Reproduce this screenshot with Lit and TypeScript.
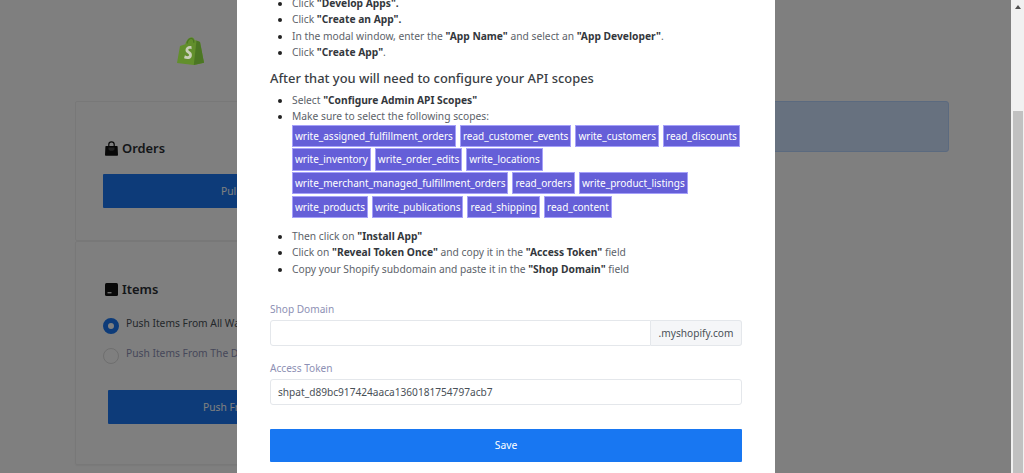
import { LitElement, html, css } from "lit";
import { customElement } from "lit/decorators.js";

const SCOPES = [
  ["write_assigned_fulfillment_orders", "read_customer_events", "write_customers", "read_discounts"],
  ["write_inventory", "write_order_edits", "write_locations"],
  ["write_merchant_managed_fulfillment_orders", "read_orders", "write_product_listings"],
  ["write_products", "write_publications", "read_shipping", "read_content"],
];

@customElement("app-root")
export class AppRoot extends LitElement {
  static styles = css`
    :host { display: block; width: 1024px; height: 473px; position: relative; overflow: hidden;
      font-family: "Noto Sans", "Open Sans", sans-serif; font-size: 10.25px; color: #5c6269; background: #fff; }
    * { box-sizing: border-box; }
    .page { width: 1011px; height: 473px; padding: 37px 62px 0 75px; overflow: hidden; }
    .logo { margin-left: 101px; height: 28px; width: 29px; display: block; position: relative; z-index: 1; }
    .cols { display: flex; gap: 16px; margin-top: 36px; }
    .left { width: 412px; flex: none; display: flex; flex-direction: column; }
    .right { flex: 1; }
    .alert { height: 51px; width: 100%; border-radius: 3px; background: #cfe2ff; border: 1px solid #b6d4fe; }
    .card { border: 1px solid #f0f0f0; border-radius: 2px; padding: 0 27px; }
    .card.orders { height: 140px; padding-top: 36px; }
    .card.items { height: 224px; padding-top: 37px; box-shadow: 0 1px 2px rgba(0,0,0,.06); }
    .title { display: flex; align-items: center; gap: 4px; font-size: 12.9px; font-weight: 600; color: #2a2e33; height: 20px; padding-left: 2px; }
    .title svg { width: 13px; height: 15px; }
    .btn { display: flex; align-items: center; justify-content: center; background: #1a77f2; color: #fff; border-radius: 1px; height: 34px; }
    .orders .btn { margin-top: 16px; }
    .items .btn { margin: 14px 0 0 5px; }
    .radio { display: flex; gap: 7px; align-items: flex-start; height: 30px; color: #495057; }
    .radios { margin-top: 17px; }
    .radio.off { color: #8d90b4; }
    .dot { width: 16px; height: 16px; border-radius: 50%; border: 1px solid #ddd; flex: none; margin-top: 2px; }
    .radio.on .dot { border: 5px solid #1a77f2; background: #fff; }

    .overlay { position: absolute; inset: 0; background: rgba(0,0,0,.5); overflow: hidden; }
    .modal { position: absolute; left: 237px; top: 0; bottom: 0; width: 538px; background: #fff; padding: 0 33px; overflow: hidden; }
    ul { margin: 0; padding: 0 0 0 22px; list-style: disc; }
    li { line-height: 16.3px; }
    li::marker { color: #222; }
    li b { color: #33373c; font-weight: 700; }
    .top { margin-top: -5px; }
    h5 { margin: 7px 0 0; font-size: 12.9px; font-weight: 500; color: #3a3e44; line-height: 22px; }
    .second { margin-top: 3px; }
    .tags { display: flex; flex-direction: column; gap: 1.2px; margin: 0 0 10.2px; }
    .row { display: flex; gap: 4px; }
    .tag { background: #655fd8; color: #fff; border: 1px solid #a5a0fa; height: 22.4px; padding: 0 2px; line-height: 20px; font-size: 10px; }
    form { margin-top: 25px; }
    label { display: block; color: #8d90b4; font-size: 10.1px; line-height: 15px; margin-bottom: 3px; }
    .group { display: flex; height: 26px; }
    .field { flex: 1; border: 1px solid #e4e7eb; border-radius: 3px; height: 26px; padding: 0 7px; line-height: 24px; color: #495057; font-size: 10.15px; }
    .group .field { border-radius: 3px 0 0 3px; }
    .addon { border: 1px solid #e4e7eb; border-left: 0; border-radius: 0 3px 3px 0; background: #f5f6f8; width: 91px; text-align: center; line-height: 24px; color: #495057; font-size: 10.15px; }
    .block { margin-bottom: 15px; }
    .save { background: #1877f2; color: #fff; height: 33px; margin-top: 24px; border-radius: 1px; display: flex; align-items: center; justify-content: center; }

    .sb { position: absolute; top: 0; right: 0; bottom: 0; width: 13px; background: #f1f1f1; display: flex; flex-direction: column; align-items: center; }
    .arrow { width: 0; height: 0; border: 3px solid transparent; border-top: 0; border-bottom: 4px solid #505050; margin-top: 5px; }
    .thumb { position: absolute; top: 111px; bottom: 0; left: 2px; right: 1px; background: #c1c1c1; }
  `;

  render() {
    return html`
      <div class="page">
        <svg class="logo" viewBox="0 0 29 28" aria-hidden="true">
          <path fill="#628f2c" d="M20 3.500 18.600 3C18 1.200 16.800.2 15.300.3 12.800.5 10.300 3.400 9.300 7.300L4 8.900 1 26l16.800 2L28 25.800 24 5z"/>
          <path fill="#4b7623" d="M20.500 3.600 17.800 28 28 25.800 24 5z"/>
          <path fill="none" stroke="#4b7623" stroke-width="1.200" d="M11 6.500c.6-2.600 2.300-5 4.300-5 1.800 0 2.500 2.600 2.500 4.300"/>
          <path fill="#c9cfb8" d="M15.500 9.300c-3.200-.9-6 1-6 3.800 0 3.200 3.600 3.300 3.600 5 0 1.300-2 1.400-4.200.2l-.9 3c3.200 1.600 7.900 1 7.900-3.400 0-3.400-3.600-3.600-3.600-5.100 0-1 1.600-1.300 3.300-.6z"/>
        </svg>
        <div class="cols">
          <div class="left">
            <div class="card orders">
              <div class="title">
                <svg viewBox="0 0 13 15"><path fill="#111" d="M1 5h11a.6.6 0 0 1 .6.6L13 14a.8.8 0 0 1-.8.8H.8A.8.8 0 0 1 0 14l.4-8.400A.6.6 0 0 1 1 5z"/><path fill="none" stroke="#111" stroke-width="1.200" d="M3.800 6.500V3.600a2.700 2.700 0 0 1 5.400 0v2.900"/><path fill="#777" d="M3.500 6.500h6v1.200a3 2 0 0 1-6 0z" opacity=".5"/></svg>
                Orders
              </div>
              <div class="btn">Pull Orders From Shopify</div>
            </div>
            <div class="card items">
              <div class="title">
                <svg viewBox="0 0 13 15"><rect x="0" y="1" width="13" height="13" rx="1.500" fill="#111"/><rect x="2.500" y="10" width="4" height="1.400" fill="#ddd"/></svg>
                Items
              </div>
              <div class="radios">
                <div class="radio on"><span class="dot"></span>Push Items From All Warehouses</div>
                <div class="radio off"><span class="dot"></span>Push Items From The Default Warehouse</div>
              </div>
              <div class="btn">Push From Warehouse To Shopify</div>
            </div>
          </div>
          <div class="right"><div class="alert"></div></div>
        </div>
      </div>
      <div class="overlay">
        <div class="modal">
          <ul class="top">
            <li>Click <b>"Develop Apps".</b></li>
            <li>Click <b>"Create an App".</b></li>
            <li>In the modal window, enter the <b>"App Name"</b> and select an <b>"App Developer"</b>.</li>
            <li>Click <b>"Create App"</b>.</li>
          </ul>
          <h5>After that you will need to configure your API scopes</h5>
          <ul class="second">
            <li>Select <b>"Configure Admin API Scopes"</b></li>
            <li>Make sure to select the following scopes:
              <div class="tags">
                ${SCOPES.map(r => html`<div class="row">${r.map(t => html`<span class="tag">${t}</span>`)}</div>`)}
              </div>
            </li>
            <li>Then click on <b>"Install App"</b></li>
            <li>Click on <b>"Reveal Token Once"</b> and copy it in the <b>"Access Token"</b> field</li>
            <li>Copy your Shopify subdomain and paste it in the <b>"Shop Domain"</b> field</li>
          </ul>
          <form>
            <div class="block">
              <label>Shop Domain</label>
              <div class="group"><div class="field"></div><div class="addon">.myshopify.com</div></div>
            </div>
            <div class="block">
              <label>Access Token</label>
              <div class="field">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</div>
            </div>
            <div class="save">Save</div>
          </form>
        </div>
      </div>
      <div class="sb"><span class="arrow"></span><span class="thumb"></span></div>
    `;
  }
}
